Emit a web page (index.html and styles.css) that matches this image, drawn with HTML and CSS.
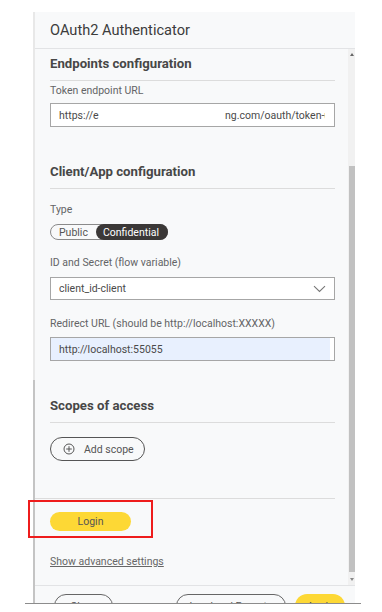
FILE: index.html
```html
<!DOCTYPE html>
<html>
<head>
<meta charset="utf-8">
<link rel="stylesheet" href="styles.css">
</head>
<body>
<div class="frame">
  <div class="rail"><div class="rail-top"></div><div class="rail-bottom"></div></div>
  <div class="panel">
    <div class="header">OAuth2 Authenticator</div>
    <div class="body">
      <div class="content">
        <div class="section-title first">Endpoints configuration</div>
        <div class="label tight">Token endpoint URL</div>
        <div class="input url-input">
          <span class="url-left">https://e</span>
          <span class="url-right">ng.com/oauth/token-u</span>
        </div>

        <div class="section-title">Client/App configuration</div>
        <div class="label after-title">Type</div>
        <div class="toggle">
          <span class="opt">Public</span>
          <span class="opt active">Confidential</span>
        </div>

        <div class="label gap16">ID and Secret (flow variable)</div>
        <div class="input select">
          <span>client_id-client</span>
          <svg class="chev" width="13" height="8" viewBox="0 0 13 8"><path d="M1 1.2 L6.5 6.5 L12 1.2" fill="none" stroke="#777" stroke-width="1.1"/></svg>
        </div>

        <div class="label gap17">Redirect URL (should be http://localhost:XXXXX)</div>
        <div class="input autofill"><span class="fill">http://localhost:55055</span></div>

        <div class="section-title">Scopes of access</div>
        <div class="add-scope">
          <svg width="12" height="12" viewBox="0 0 12 12"><circle cx="6" cy="6" r="5" fill="none" stroke="#555" stroke-width="1"/><path d="M6 3.2 V8.8 M3.2 6 H8.8" stroke="#555" stroke-width="1"/></svg>
          <span>Add scope</span>
        </div>

        <div class="separator"></div>
        <div class="login">Login</div>
        <a class="advanced">Show advanced settings</a>
      </div>
      <div class="scrollbar">
        <div class="arrow up"></div>
        <div class="track"><div class="thumb"></div></div>
        <div class="arrow down"></div>
      </div>
    </div>
    <div class="footer">
      <span class="fbtn close">Close</span>
      <span class="fbtn exec">Load and Execute</span>
      <span class="fbtn apply">Apply</span>
    </div>
  </div>
</div>
<div class="cutline"></div>
<div class="annotation"></div>
</body>
</html>
```
FILE: styles.css
```css
html, body {
  margin: 0;
  padding: 0;
  background: #ffffff;
  font-family: Roboto, "Liberation Sans", sans-serif;
  width: 382px;
  height: 612px;
  overflow: hidden;
  position: relative;
}
.frame {
  margin: 12px 0 0 33px;
  width: 322px;
  height: 591px;
  display: flex;
  overflow: hidden;
}
.rail {
  width: 2px;
  display: flex;
  flex-direction: column;
}
.rail-top {
  height: 368px;
  background: #e8e8e8;
}
.rail-bottom {
  flex: 1;
  background: #c4c4c4;
}
.panel {
  width: 320px;
  background: #f8f9fa;
  display: flex;
  flex-direction: column;
}
.header {
  height: 36px;
  flex: none;
  border-bottom: 1px solid #e2e3e5;
  padding-left: 15px;
  display: flex;
  align-items: center;
  font-size: 14.6px;
  color: #3c3c3c;
}
.body {
  height: 536px;
  flex: none;
  display: flex;
  border-bottom: 1px solid #e2e3e5;
}
.content {
  width: 285px;
  padding: 0 10px 0 15px;
  display: flex;
  flex-direction: column;
  align-items: flex-start;
}
.section-title {
  align-self: stretch;
  margin-top: 36px;
  line-height: 18px;
  padding-bottom: 7px;
  border-bottom: 1px solid #dcdcdc;
  font-size: 13.2px;
  font-weight: bold;
  color: #474747;
}
.section-title.first { margin-top: 6px; }
.label {
  font-size: 10.5px;
  line-height: 14px;
  color: #636466;
}
.label.tight { margin-top: 3px; }
.label.after-title { margin-top: 14px; }
.label.gap16 { margin-top: 16px; }
.label.gap17 { margin-top: 17px; }
.input {
  align-self: stretch;
  box-sizing: border-box;
  height: 24px;
  border: 1px solid #a6a6a6;
  background: #fff;
  font-size: 10.5px;
  color: #4a4a4a;
  display: flex;
  align-items: center;
  padding: 0 8px;
}
.url-input {
  margin-top: 5px;
  justify-content: space-between;
  padding-right: 9px;
}
.url-left {
  width: 40px;
  overflow: hidden;
  white-space: nowrap;
}
.url-right {
  width: 100px;
  overflow: hidden;
  white-space: nowrap;
}
.toggle {
  margin-top: 7px;
  height: 16px;
  box-sizing: border-box;
  border: 1px solid #8a8a8a;
  border-radius: 8px;
  display: flex;
  align-items: stretch;
  font-size: 10.5px;
  width: 118px;
}
.opt {
  display: flex;
  align-items: center;
  color: #555;
  padding: 0 8px;
}
.opt:first-child { width: 29px; }
.opt.active {
  flex: 1;
  background: #3b3837;
  color: #fff;
  border-radius: 8px;
  margin: -1px -1px -1px 0;
  padding: 0 7px;
}
.select {
  margin-top: 7px;
  height: 23px;
  justify-content: space-between;
  padding-right: 8px;
}
.autofill {
  margin-top: 6px;
  padding: 0 4px 0 0;
}
.fill {
  flex: 1;
  align-self: stretch;
  background: #e8f0fe;
  display: flex;
  align-items: center;
  padding-left: 8px;
}
.add-scope {
  margin-top: 14px;
  height: 24px;
  box-sizing: border-box;
  border: 1px solid #555;
  border-radius: 12px;
  width: 95px;
  display: flex;
  align-items: center;
  gap: 9px;
  padding-left: 12px;
  font-size: 10.5px;
  color: #555;
}
.separator {
  margin-top: 37px;
  margin-left: -15px;
  align-self: stretch;
  height: 1px;
  background: #dcdcdc;
}
.login {
  margin-top: 13px;
  width: 81px;
  height: 19px;
  border-radius: 10px;
  background: #fdd835;
  color: #555;
  font-size: 10.5px;
  display: flex;
  align-items: center;
  justify-content: center;
}
.advanced {
  margin-top: 24px;
  font-size: 10.5px;
  line-height: 14px;
  color: #666;
  text-decoration: underline;
}
.scrollbar {
  width: 7px;
  margin-left: 3px;
  background: #f1f1f1;
  display: flex;
  flex-direction: column;
  align-items: stretch;
}
.arrow {
  height: 12px;
  display: flex;
  justify-content: center;
  align-items: center;
}
.arrow.up::before {
  content: "";
  border-left: 2px solid transparent;
  border-right: 2px solid transparent;
  border-bottom: 3px solid #666;
  margin-top: -2px;
}
.arrow.down::before {
  content: "";
  border-left: 2px solid transparent;
  border-right: 2px solid transparent;
  border-top: 3px solid #888;
}
.track {
  flex: 1;
  display: flex;
  flex-direction: column;
  padding-top: 105px;
}
.thumb {
  height: 406px;
  background: #c1c1c1;
  margin-left: 1px;
}
.footer {
  flex: none;
  height: 30px;
  display: flex;
  align-items: flex-start;
  padding-top: 8px;
  position: relative;
}
.fbtn {
  height: 24px;
  box-sizing: border-box;
  border-radius: 12px;
  font-size: 10.5px;
  color: #555;
  display: flex;
  align-items: center;
  justify-content: center;
}
.close {
  margin-left: 19px;
  width: 59px;
  border: 1px solid #666;
}
.exec {
  margin-left: 63px;
  width: 110px;
  border: 1px solid #666;
}
.apply {
  margin-left: 9px;
  width: 50px;
  background: #fdd835;
}
.cutline {
  position: absolute;
  left: 25px;
  top: 603px;
  width: 336px;
  height: 1px;
  background: #8c8c8c;
}
.annotation {
  position: absolute;
  left: 28px;
  top: 500px;
  width: 121px;
  height: 34px;
  border: 2.5px solid #ee1c1c;
}
```
